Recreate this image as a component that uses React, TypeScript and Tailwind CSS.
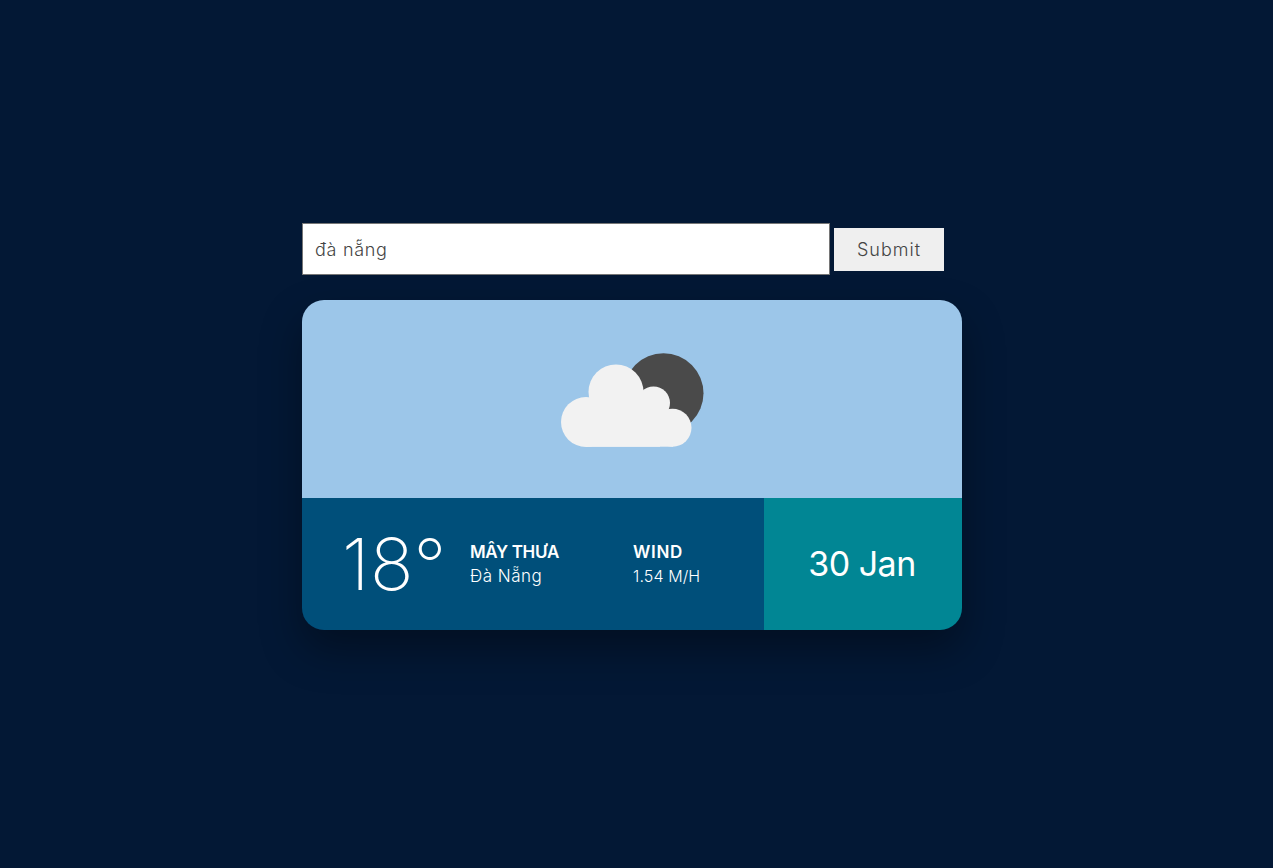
import React from 'react';

const font = "font-['Inter','Noto_Sans',sans-serif]";

function CloudIcon() {
  return (
    <svg width="180" height="120" viewBox="0 0 180 120">
      <circle cx="123.5" cy="53.3" r="40" fill="#4a4a4a" />
      <g fill="#f2f2f2">
        <circle cx="46" cy="82" r="25" />
        <circle cx="76" cy="52" r="27.5" />
        <circle cx="113.5" cy="63" r="16.5" />
        <circle cx="132.5" cy="87.7" r="19" />
        <rect x="46" y="66" width="74" height="40.7" />
        <rect x="46" y="72" width="87" height="34.7" />
      </g>
    </svg>
  );
}

export default function App() {
  return (
    <div className={`min-h-[868px] bg-[#031835] pt-[223px] ${font}`}>
      <div className="ml-[302px] w-[660px]">
        <form className="flex items-center gap-1" onSubmit={e => e.preventDefault()}>
          <input
            defaultValue="đà nẵng"
            className={`h-[52px] w-[528px] border border-[#767676] bg-white px-3 text-[18px] font-light tracking-[0.7px] text-[#444] outline-none ${font}`}
          />
          <button className="h-[43px] w-[110px] bg-[#efefef] text-[18px] font-light tracking-[1px] text-[#444]">Submit</button>
        </form>

        <div className="mt-[25px] overflow-hidden rounded-[22px] shadow-[0_20px_40px_rgba(0,0,0,0.35)]">
          <div className="flex h-[198px] justify-center bg-[#9cc6e9] pt-[40px] pr-[4px]">
            <CloudIcon />
          </div>
          <div className="flex h-[132px] text-white">
            <div className="flex flex-1 items-center bg-[#004f7a]">
              <div className="ml-[40px] w-[128px] text-[72px] leading-none font-extralight tracking-[0.5px]">18°</div>
              <div className="w-[163px]">
                <div className="text-[17px] leading-[24px] font-semibold tracking-[-0.35px]">MÂY THƯA</div>
                <div className="text-[17px] leading-[25px] font-light tracking-[0.5px]">Đà Nẵng</div>
              </div>
              <div>
                <div className="text-[17px] leading-[24px] font-semibold tracking-[0.7px]">WIND</div>
                <div className="text-[16px] leading-[25px] font-light tracking-[0.1px]">1.54 M/H</div>
              </div>
            </div>
            <div className="flex w-[198px] items-center justify-center bg-[#018694] pr-[2px] pb-[2px] text-[34px] font-normal tracking-[-0.5px]">30 Jan</div>
          </div>
        </div>
      </div>
    </div>
  );
}
